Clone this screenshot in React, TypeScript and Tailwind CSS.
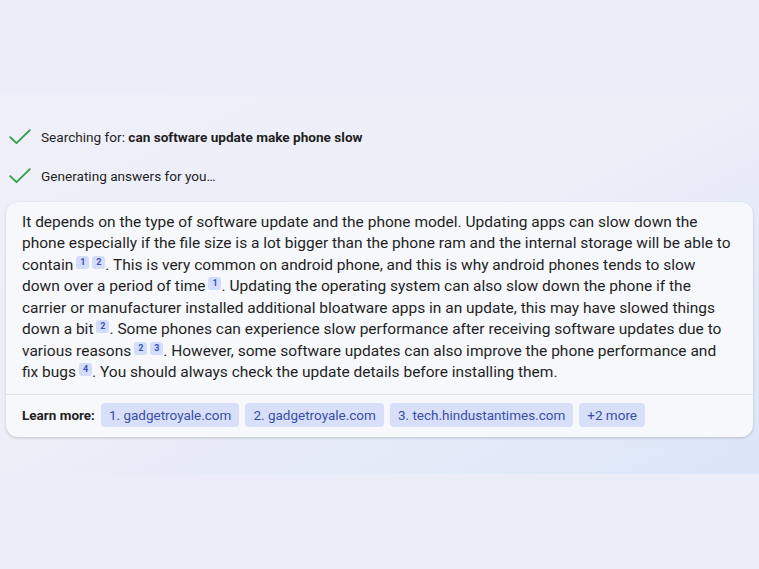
import React from "react";

const Check = () => (
  <svg width="22" height="16" viewBox="0 0 22 16" fill="none" className="shrink-0">
    <path d="M1.2 8.2 L7.5 14.2 L20.8 1.2" stroke="#2E9E48" strokeWidth="1.8" strokeLinecap="round" strokeLinejoin="round" />
  </svg>
);

const Sup = ({ n }: { n: number }) => (
  <span className="relative -top-[5px] ml-[3px] inline-flex h-[13px] min-w-[13px] items-center justify-center rounded-[3px] bg-[#D3DCF8] px-[3px] text-[9px] font-bold leading-none text-[#3553C4]">
    {n}
  </span>
);

const Chip = ({ children }: { children: React.ReactNode }) => (
  <span className="inline-flex h-[24px] items-center rounded-[4px] bg-[#D7E0F8] px-[8px] text-[13.5px] text-[#3B4FA8]">
    {children}
  </span>
);

export default function App() {
  return (
    <div
      className="flex h-[569px] w-[759px] flex-col bg-[#ECEDF8] text-[#1f1f1f]"
      style={{ fontFamily: "Roboto, 'Noto Sans', sans-serif" }}
    >
      <div className="h-[95px] shrink-0" />
      <div className="flex h-[379px] shrink-0 flex-col bg-gradient-to-br from-[#EFF0F8] via-[#ECEEF8] to-[#DCE6F8] pt-[32px]">
        <div className="flex h-[20px] items-center gap-[10px] pl-[9px] text-[13.6px]">
          <Check />
          <span>
            Searching for: <span className="font-bold">can software update make phone slow</span>
          </span>
        </div>
        <div className="mt-[19px] flex h-[20px] items-center gap-[10px] pl-[9px] text-[13.6px]">
          <Check />
          <span>Generating answers for you…</span>
        </div>
        <div className="mx-[6px] mt-[16px] rounded-[12px] bg-[#F7F8FC] shadow-[0_1px_3px_rgba(0,0,0,0.18)]">
          <div className="whitespace-nowrap px-[16px] pb-[10px] pt-[10px] text-[15.5px] leading-[21.45px]">
            It depends on the type of software update and the phone model. Updating apps can slow down the
            <br />
            phone especially if the file size is a lot bigger than the phone ram and the internal storage will be able to
            <br />
            contain<Sup n={1} /><Sup n={2} />. This is very common on android phone, and this is why android phones tends to slow
            <br />
            down over a period of time<Sup n={1} />. Updating the operating system can also slow down the phone if the
            <br />
            carrier or manufacturer installed additional bloatware apps in an update, this may have slowed things
            <br />
            down a bit<Sup n={2} />. Some phones can experience slow performance after receiving software updates due to
            <br />
            various reasons<Sup n={2} /><Sup n={3} />. However, some software updates can also improve the phone performance and
            <br />
            fix bugs<Sup n={4} />. You should always check the update details before installing them.
          </div>
          <div className="h-px bg-[#E1E3EA]" />
          <div className="flex items-center gap-[6px] px-[16px] pb-[10px] pt-[8px]">
            <span className="text-[13.5px] font-bold text-[#1f1f1f]">Learn more:</span>
            <Chip>1. gadgetroyale.com</Chip>
            <Chip>2. gadgetroyale.com</Chip>
            <Chip>3. tech.hindustantimes.com</Chip>
            <Chip>+2 more</Chip>
          </div>
        </div>
      </div>
    </div>
  );
}
